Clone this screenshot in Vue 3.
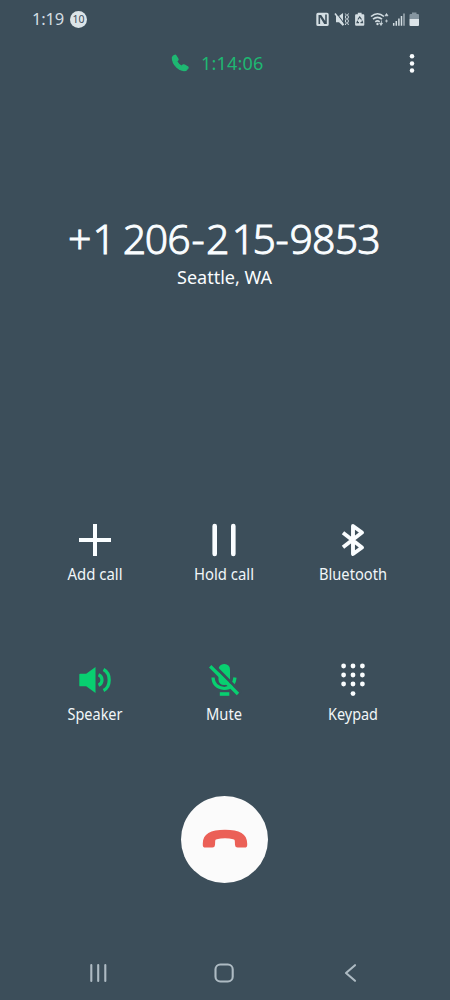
<script setup>
const actions = [
  { id: 'add', label: 'Add call', width: 55 },
  { id: 'hold', label: 'Hold call', width: 60 },
  { id: 'bluetooth', label: 'Bluetooth', width: 68 },
  { id: 'speaker', label: 'Speaker', width: 55 },
  { id: 'mute', label: 'Mute', width: 36 },
  { id: 'keypad', label: 'Keypad', width: 50 }
]
const dots = [
  [8.6, 4], [18, 4], [27.4, 4],
  [8.6, 13], [18, 13], [27.4, 13],
  [8.6, 22], [18, 22], [27.4, 22],
  [18, 31.6]
]
</script>

<template>
  <main class="screen">
    <header class="status">
      <span class="clock">1:19</span>
      <span class="badge">10</span>
      <svg class="tray" viewBox="315 10 106 18" width="106" height="18">
        <path fill="#d3dde2" fill-rule="evenodd" d="M318 12.700h9q1.700 0 1.700 1.700v10q0 1.700-1.700 1.700h-9q-1.700 0-1.700-1.700v-10q0-1.700 1.700-1.700zM318.500 15v8.900h1.600v-6.700l4.100 6.900h2.600v-9.500h-1.600v6.500l-4-6.100z" />
        <path fill="#d3dde2" d="M336 16h3l4-3v13l-4-3.700h-3z" />
        <path d="M336 12.500l8.500 11.500" stroke="#3c4e5a" stroke-width="1.200" />
        <path d="M335 13.500l8.700 11.500" stroke="#d3dde2" stroke-width="1.500" />
        <path d="M345.300 13.500l1 1.500-1 2 1 2-1 2 1 2-1 2M348.500 13.500l-1 1.500 1 2-1 2 1 2-1 2 1 2" fill="none" stroke="#d3dde2" stroke-width="1" />
        <path fill="#d3dde2" d="M357.800 12.700h3.800v1.600h1.700q1 0 1 1v9.500q0 1-1 1h-7.200q-1 0-1-1v-9.500q0-1 1-1h1.700z" />
        <path d="M357.900 19.500l1.800-2.500 1.800 2.500M362 20.700l.5 2h-2M359 22.700h-2l.7-2" fill="none" stroke="#3c4e5a" stroke-width="1.200" />
        <g fill="none" stroke="#d3dde2" stroke-width="1.600">
          <path d="M371 16.500q6.500-5.500 13 0M373 19.200q4.500-3.700 9 0M375.300 21.800q2.200-1.800 4.400 0" />
        </g>
        <circle cx="377.500" cy="24" r="1.200" fill="#d3dde2" />
        <path d="M386.500 13.500l1.500 2.300h-3zM381 25.500l-1.500-2.300h3zM386.500 19.500v3M385 21h3M381.500 20.500v3" fill="#d3dde2" stroke="#d3dde2" stroke-width=".7" />
        <path d="M393.700 23v2.700M396.300 21v4.700M398.900 18.500v7.200M401.500 16v9.700" stroke="#d3dde2" stroke-width="1.500" />
        <path d="M404 13.500v12.200" stroke="#b0bcc3" stroke-width="1.300" />
        <path fill="#8595a0" d="M412 12.500h4.500v1.500h1.500q1 0 1 1v4h-9.500v-4q0-1 1-1h1.500z" />
        <path fill="#dce4e8" d="M409.500 19h9.500v6q0 1-1 1h-7.500q-1 0-1-1z" />
      </svg>
    </header>

    <section class="callbar">
      <svg viewBox="0 0 18 18" width="18" height="18">
        <path fill="#1eb872" stroke="#1eb872" stroke-width="1.300" stroke-linejoin="round" d="M1.400 3.600Q1.900 1.900 3.700 1.300q.8-.3 1.300.5l1.800 3q.5.900-.2 1.500L5.600 7.300q1.600 3.200 5 5l1.400-1.200q.7-.5 1.500 0l3 1.800q.8.500.4 1.300-1.400 2.500-4 2.500-3.700-.2-7-3.400Q1.400 9.300 1.400 3.600z" />
      </svg>
      <span class="timer">1:14:06</span>
      <svg class="more" viewBox="0 0 6 20" width="6" height="20" fill="#fafdff">
        <circle cx="3" cy="3.300" r="2.250" /><circle cx="3" cy="10.500" r="2.250" /><circle cx="3" cy="17.600" r="2.250" />
      </svg>
    </section>

    <section class="caller">
      <svg class="number" viewBox="0 -8 330 64" width="330" height="64">
        <text y="40" x="8 32.500 56 62.800 84.800 107.300 131.500 146 171.700 192.500 215.500 229.500 252 274.700 297.200">+1 206-215-9853</text>
      </svg>
      <svg class="place" viewBox="0 0 110 26" width="110" height="26">
        <text x="54.500" y="18.500" text-anchor="middle" textLength="95" lengthAdjust="spacingAndGlyphs">Seattle, WA</text>
      </svg>
    </section>

    <section class="actions">
      <div v-for="a in actions" :key="a.id" class="action">
        <svg viewBox="0 0 36 36" width="36" height="36" fill="none">
          <path v-if="a.id === 'add'" d="M18 2v32M2 18h32" stroke="#fafdff" stroke-width="4" />
          <path v-else-if="a.id === 'hold'" d="M8.700 4v28M27.300 4v28" stroke="#fafdff" stroke-width="4.600" stroke-linecap="round" />
          <path v-else-if="a.id === 'bluetooth'" d="M8 10.800L27 25.500 18 32V4L27 10.500 8 25.200" stroke="#fafdff" stroke-width="3.900" stroke-linejoin="round" />
          <template v-else-if="a.id === 'speaker'">
            <path fill="#08cf70" d="M3.200 11.700h6L18.500 5v26L9.200 24.300h-6q-.9 0-.9-.9V12.600q0-.9.9-.9z" />
            <path d="M21.500 12.700Q25 14 25 18t-3.500 5.300M26.500 7.500Q32.200 10.500 32.200 18t-5.700 10.500" stroke="#08cf70" stroke-width="3.200" />
          </template>
          <template v-else-if="a.id === 'mute'">
            <rect x="12.500" y="2" width="11.500" height="21" rx="5.500" fill="#08cf70" />
            <path d="M7 15.500Q7.500 25.500 18.300 26.500 27.800 26 29 15.500" stroke="#08cf70" stroke-width="3.200" />
            <path d="M13.800 32h9.500" stroke="#08cf70" stroke-width="3.600" />
            <path d="M6.500 2L35 30.500" stroke="#3c4e5a" stroke-width="3" />
            <path d="M4.200 4.200L32 32" stroke="#08cf70" stroke-width="3.400" />
          </template>
          <g v-else fill="#fafdff">
            <circle v-for="(d, i) in dots" :key="i" :cx="d[0]" :cy="d[1]" r="2.400" />
          </g>
        </svg>
        <svg class="label" viewBox="0 0 90 22" width="90" height="22">
          <text x="45" y="16" text-anchor="middle" :textLength="a.width" lengthAdjust="spacingAndGlyphs">{{ a.label }}</text>
        </svg>
      </div>
    </section>

    <button class="end" aria-label="End call">
      <svg viewBox="0 0 46 20" width="46" height="20">
        <path fill="#eb6057" d="M.8 14.500C.8 5 8.500.8 23 .8s22.200 4.200 22.200 13.700V16q0 2.600-2.600 2.600h-7q-2.400 0-2.600-2.500l-.2-4.300q0-1.200-1.600-1.600Q27.500 9.300 23 9.300t-8.200.9q-1.600.4-1.600 1.600l-.2 4.300q-.2 2.500-2.600 2.500h-7Q.8 18.600.8 16z" />
      </svg>
    </button>

    <nav class="nav">
      <svg viewBox="0 0 24 24" width="24" height="24"><path d="M5.300 4v16M12.200 4v16M19.300 4v16" /></svg>
      <svg viewBox="0 0 24 24" width="24" height="24"><rect x="3.500" y="3.500" width="17.200" height="17" rx="4.800" /></svg>
      <svg viewBox="0 0 24 24" width="24" height="24"><path d="M17 4.200L8 12l9 7.800" /></svg>
    </nav>
  </main>
</template>

<style>
body { background: #3c4e5a; }
</style>

<style scoped>
.screen {
  width: 450px;
  height: 1000px;
  display: flex;
  flex-direction: column;
  align-items: center;
  overflow: hidden;
  background: #3c4e5a;
  color: #fafdff;
  font-family: "Noto Sans", "Open Sans", sans-serif;
}
svg { display: block; flex: none; }
.status {
  width: 100%;
  height: 38px;
  padding: 0 29px 0 32px;
  box-sizing: border-box;
  display: flex;
  align-items: center;
  color: #d3dde2;
}
.clock { width: 38px; font-size: 16.500px; line-height: 20px; letter-spacing: -.2px; }
.badge {
  width: 17px;
  height: 17px;
  border-radius: 50%;
  background: #dce4e8;
  color: #3c4e5a;
  font-size: 10.500px;
  line-height: 17px;
  text-align: center;
}
.tray { margin-left: auto; }
.callbar {
  width: 100%;
  height: 50px;
  padding: 0 35px 0 171px;
  box-sizing: border-box;
  display: flex;
  align-items: center;
}
.timer { margin-left: 12px; color: #1eb872; font-size: 18px; line-height: 24px; letter-spacing: .2px; }
.more { margin-left: auto; }
.caller {
  height: 417px;
  padding-top: 118px;
  box-sizing: border-box;
  display: flex;
  flex-direction: column;
  align-items: center;
}
.number text { font-size: 41px; font-weight: 300; fill: #fafdff; stroke: #fafdff; stroke-width: .9px; }
.place { margin-top: -5px; }
.place text { font-size: 18px; fill: #fafdff; }
.actions {
  margin-right: 2px;
  display: grid;
  grid-template-columns: repeat(3, 129px);
  grid-auto-rows: 140px;
}
.action {
  padding-top: 17px;
  display: flex;
  flex-direction: column;
  align-items: center;
}
.label { margin-top: 6px; }
.label text { font-size: 15.500px; fill: #f1f6f8; }
.end {
  width: 87px;
  height: 87px;
  margin: 11px 1px 0 0;
  padding: 0 0 2px;
  box-sizing: border-box;
  border: 0;
  border-radius: 50%;
  background: #fbfbfb;
  display: flex;
  align-items: center;
  justify-content: center;
}
.nav {
  width: 276px;
  margin: 78px 2px 0 0;
  display: flex;
  justify-content: space-between;
}
.nav svg { fill: none; stroke: #aebbc3; stroke-width: 2.100; stroke-linecap: round; stroke-linejoin: round; }
</style>
